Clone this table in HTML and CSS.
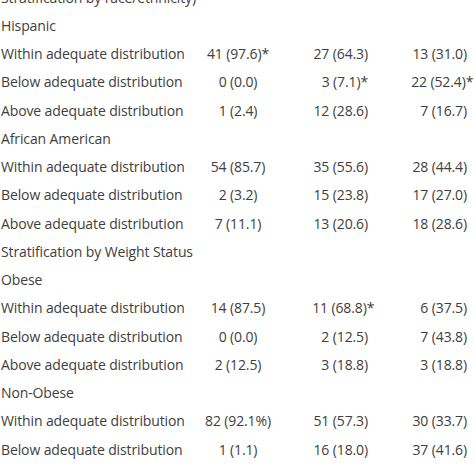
FILE: index.html
```html
<!DOCTYPE html>
<html>
<head>
<meta charset="utf-8">
<link rel="stylesheet" href="styles.css">
</head>
<body>
<div class="table">
  <div class="row"><span class="label">Stratification by race/ethnicity)</span></div>
  <div class="row"><span class="label">Hispanic</span></div>
  <div class="row"><span class="label">Within adequate distribution</span><span class="c1">41 (97.6)*</span><span class="c2">27 (64.3)</span><span class="c3">13 (31.0)</span></div>
  <div class="row"><span class="label">Below adequate distribution</span><span class="c1">0 (0.0)</span><span class="c2">3 (7.1)*</span><span class="c3">22 (52.4)<span class="hang">*</span></span></div>
  <div class="row"><span class="label">Above adequate distribution</span><span class="c1">1 (2.4)</span><span class="c2">12 (28.6)</span><span class="c3">7 (16.7)</span></div>
  <div class="row"><span class="label">African American</span></div>
  <div class="row"><span class="label">Within adequate distribution</span><span class="c1">54 (85.7)</span><span class="c2">35 (55.6)</span><span class="c3">28 (44.4)</span></div>
  <div class="row"><span class="label">Below adequate distribution</span><span class="c1">2 (3.2)</span><span class="c2">15 (23.8)</span><span class="c3">17 (27.0)</span></div>
  <div class="row"><span class="label">Above adequate distribution</span><span class="c1">7 (11.1)</span><span class="c2">13 (20.6)</span><span class="c3">18 (28.6)</span></div>
  <div class="row"><span class="label">Stratification by Weight Status</span></div>
  <div class="row"><span class="label">Obese</span></div>
  <div class="row"><span class="label">Within adequate distribution</span><span class="c1">14 (87.5)</span><span class="c2">11 (68.8)<span class="hang">*</span></span><span class="c3">6 (37.5)</span></div>
  <div class="row"><span class="label">Below adequate distribution</span><span class="c1">0 (0.0)</span><span class="c2">2 (12.5)</span><span class="c3">7 (43.8)</span></div>
  <div class="row"><span class="label">Above adequate distribution</span><span class="c1">2 (12.5)</span><span class="c2">3 (18.8)</span><span class="c3">3 (18.8)</span></div>
  <div class="row"><span class="label">Non-Obese</span></div>
  <div class="row"><span class="label">Within adequate distribution</span><span class="c1">82 (92.1%)</span><span class="c2">51 (57.3)</span><span class="c3">30 (33.7)</span></div>
  <div class="row"><span class="label">Below adequate distribution</span><span class="c1">1 (1.1)</span><span class="c2">16 (18.0)</span><span class="c3">37 (41.6)</span></div>
  <div class="row partial"><span class="label">Above adequate distribution</span><span class="c1">6 (6.7)</span><span class="c2">22 (24.7)</span><span class="c3">22 (24.7)</span></div>
</div>
</body>
</html>
```
FILE: styles.css
```css
html, body {
  margin: 0;
  padding: 0;
  background: #ffffff;
  overflow: hidden;
}
.table {
  margin-top: -16.5px;
  font-family: "Open Sans", "Noto Sans", sans-serif;
  font-size: 14px;
  letter-spacing: -0.12px;
  color: #404040;
}
.row {
  display: grid;
  grid-template-columns: 200px 76px 92px 99px;
  height: 28.27px;
  line-height: 28.27px;
  white-space: nowrap;
}
.row.partial {
  padding-top: 2px;
}
.label {
  padding-left: 1px;
}
.c1 {
  text-align: center;
}
.c2, .c3 {
  text-align: right;
}
.hang {
  margin-right: -0.45em;
}
```
